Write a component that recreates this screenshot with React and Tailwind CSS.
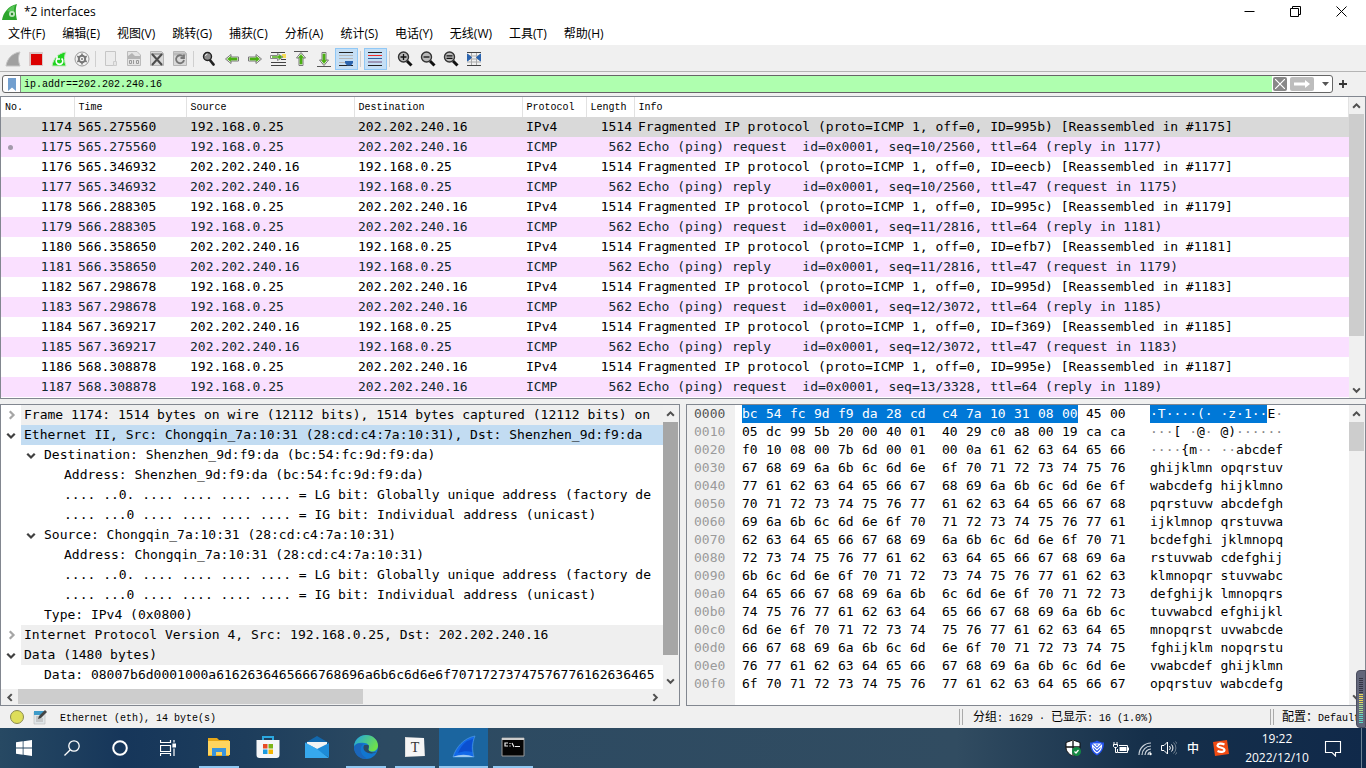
const MENUS = ["文件(F)", "编辑(E)", "视图(V)", "跳转(G)", "捕获(C)", "分析(A)", "统计(S)", "电话(Y)", "无线(W)", "工具(T)", "帮助(H)"];

const frag = (id, n) => `Fragmented IP protocol (proto=ICMP 1, off=0, ID=${id}) [Reassembled in #${n}]`;
const request = (seq, n) => `Echo (ping) request  id=0x0001, seq=${seq}, ttl=64 (reply in ${n})`;
const reply = (seq, n) => `Echo (ping) reply    id=0x0001, seq=${seq}, ttl=47 (request in ${n})`;

const HOST = "192.168.0.25";
const SERVER = "202.202.240.16";

const PACKETS = [
  [1174, "565.275560", HOST, SERVER, "IPv4", 1514, frag("995b", 1175)],
  [1175, "565.275560", HOST, SERVER, "ICMP", 562, request("10/2560", 1177)],
  [1176, "565.346932", SERVER, HOST, "IPv4", 1514, frag("eecb", 1177)],
  [1177, "565.346932", SERVER, HOST, "ICMP", 562, reply("10/2560", 1175)],
  [1178, "566.288305", HOST, SERVER, "IPv4", 1514, frag("995c", 1179)],
  [1179, "566.288305", HOST, SERVER, "ICMP", 562, request("11/2816", 1181)],
  [1180, "566.358650", SERVER, HOST, "IPv4", 1514, frag("efb7", 1181)],
  [1181, "566.358650", SERVER, HOST, "ICMP", 562, reply("11/2816", 1179)],
  [1182, "567.298678", HOST, SERVER, "IPv4", 1514, frag("995d", 1183)],
  [1183, "567.298678", HOST, SERVER, "ICMP", 562, request("12/3072", 1185)],
  [1184, "567.369217", SERVER, HOST, "IPv4", 1514, frag("f369", 1185)],
  [1185, "567.369217", SERVER, HOST, "ICMP", 562, reply("12/3072", 1183)],
  [1186, "568.308878", HOST, SERVER, "IPv4", 1514, frag("995e", 1187)],
  [1187, "568.308878", HOST, SERVER, "ICMP", 562, request("13/3328", 1189)],
];

const TREE = [
  { level: 0, arrow: "right", bg: "bg-[#efefef]", text: "Frame 1174: 1514 bytes on wire (12112 bits), 1514 bytes captured (12112 bits) on" },
  { level: 0, arrow: "down", bg: "bg-[#c2dcf2]", text: "Ethernet II, Src: Chongqin_7a:10:31 (28:cd:c4:7a:10:31), Dst: Shenzhen_9d:f9:da" },
  { level: 1, arrow: "down", text: "Destination: Shenzhen_9d:f9:da (bc:54:fc:9d:f9:da)" },
  { level: 2, text: "Address: Shenzhen_9d:f9:da (bc:54:fc:9d:f9:da)" },
  { level: 2, text: ".... ..0. .... .... .... .... = LG bit: Globally unique address (factory de" },
  { level: 2, text: ".... ...0 .... .... .... .... = IG bit: Individual address (unicast)" },
  { level: 1, arrow: "down", text: "Source: Chongqin_7a:10:31 (28:cd:c4:7a:10:31)" },
  { level: 2, text: "Address: Chongqin_7a:10:31 (28:cd:c4:7a:10:31)" },
  { level: 2, text: ".... ..0. .... .... .... .... = LG bit: Globally unique address (factory de" },
  { level: 2, text: ".... ...0 .... .... .... .... = IG bit: Individual address (unicast)" },
  { level: 1, text: "Type: IPv4 (0x0800)" },
  { level: 0, arrow: "right", bg: "bg-[#efefef]", text: "Internet Protocol Version 4, Src: 192.168.0.25, Dst: 202.202.240.16" },
  { level: 0, arrow: "down", bg: "bg-[#efefef]", text: "Data (1480 bytes)" },
  { level: 1, text: "Data: 08007b6d0001000a6162636465666768696a6b6c6d6e6f70717273747576776162636465" },
];

// headers first, then the ping payload: a..w over and over
const HEAD = "bc 54 fc 9d f9 da 28 cd c4 7a 10 31 08 00 45 00 05 dc 99 5b 20 00 40 01 40 29 c0 a8 00 19 ca ca f0 10 08 00 7b 6d 00 01 00 0a".split(" ");
const BYTES = [...HEAD];
while (BYTES.length < 256) BYTES.push((0x61 + ((BYTES.length - HEAD.length) % 23)).toString(16));
const HEX_ROWS = Array.from({ length: 16 }, (_, i) => BYTES.slice(i * 16, i * 16 + 16));
const SELECTED = 14;

const toChar = (h) => {
  const n = parseInt(h, 16);
  return n >= 32 && n < 127 ? String.fromCharCode(n) : "·";
};
const toAscii = (b) => b.slice(0, 8).map(toChar).join("") + " " + b.slice(8).map(toChar).join("");

function Ascii({ text }) {
  return text.split(/(·+)/).map((s, i) => (
    <span key={i} className={s[0] === "·" ? "text-[#888]" : ""}>{s}</span>
  ));
}

function Byte({ row, col, value }) {
  const on = row === 0 && col < SELECTED;
  const width = col === 7 ? "w-8" : col === 15 || (on && col === SELECTED - 1) ? "w-4" : "w-6";
  const gap = on && col === SELECTED - 1 ? " mr-2" : "";
  return <span className={width + gap + (on ? " bg-[#0078d7] text-white" : "")}>{value}</span>;
}

function Chevron({ dir, className }) {
  const d = { up: "M1 6l3-3 3 3", down: "M1 3l3 3 3-3", left: "M6 1L3 4l3 3", right: "M3 1l3 3-3 3" }[dir];
  return (
    <svg viewBox="0 0 8 8" className={className || "size-[9px] text-[#505050]"} fill="none" stroke="currentColor" strokeWidth="1.8">
      <path d={d} />
    </svg>
  );
}

function ScrollBar({ children, label }) {
  return (
    <div className="flex w-4 shrink-0 flex-col bg-[#f0f0f0]">
      <button aria-label={label + " up"} className="flex h-[17px] w-[15px] items-center justify-center"><Chevron dir="up" /></button>
      <div className="w-[15px] flex-1">{children}</div>
      <button aria-label={label + " down"} className="flex h-[17px] w-[15px] items-center justify-center"><Chevron dir="down" /></button>
    </div>
  );
}

function Fin({ light, dark, children }) {
  return (
    <svg viewBox="0 0 16 16" className="size-4">
      <path d="M1 15C2 8 7 2 15 1c-2 4-2 9 0 14z" fill={dark} stroke={light} strokeWidth="1" />
      {children}
    </svg>
  );
}

const page = <path d="M1.500 .5h11l2 2v12h-13z" fill="#d9d9d9" stroke="#b5b5b5" />;

function Lens({ children }) {
  return (
    <svg viewBox="0 0 16 16" className="size-4">
      <path d="M10 10l4.500 4.500" stroke="#111" strokeWidth="3" />
      <circle cx="6.500" cy="6" r="5" fill="#b9b9b9" stroke="#333" strokeWidth="1.400" />
      <path d={children} stroke="#111" strokeWidth="1.300" fill="none" />
    </svg>
  );
}

function Arrow({ rotate, bar }) {
  return (
    <svg viewBox="0 0 16 16" className="size-4">
      <g transform={`rotate(${rotate} 8 8)`}>
        <path d="M1.500 8L7 3.500V6h7.500v4H7v2.500z" fill="#fff" stroke="#777" />
        <path d="M3.500 8l3-2.300v1.300H13v2H6.500v1.300z" fill="#4caf14" stroke="#4caf14" strokeWidth=".8" />
      </g>
      {bar && <path d={bar} stroke="#555" />}
    </svg>
  );
}

const TOOLS = [
  { name: "Start capture", icon: <Fin light="#c4c4c4" dark="#a0a0a0" /> },
  { name: "Stop capture", icon: <svg viewBox="0 0 16 16" className="size-4"><path d="M1 1h14v14H1z" fill="#d9c9c9" /><path d="M3 3h11v11H3z" fill="#dc0000" /></svg> },
  {
    name: "Restart capture",
    icon: <Fin light="#c8e6c0" dark="#1fd51f"><path d="M6.500 7.500a3.300 3.300 0 1 0 4 0M6 5v3h3" fill="none" stroke="#fff" strokeWidth="1.600" /></Fin>,
  },
  {
    name: "Capture options",
    icon: (
      <svg viewBox="0 0 16 16" className="size-4">
        <circle cx="8" cy="8" r="7" fill="#f2f2f2" stroke="#999" />
        <circle cx="8" cy="8" r="3.200" fill="none" stroke="#777" strokeWidth="2" />
        <path d="M8 2.500v2M8 11.500v2M3.200 5.300l1.800 1M11 9.700l1.800 1M3.200 10.700l1.800-1M11 6.300l1.800-1" stroke="#777" strokeWidth="1.600" />
        <circle cx="8" cy="8" r="1" fill="#777" />
      </svg>
    ),
  },
  null,
  { name: "Open", icon: <svg viewBox="0 0 16 16" className="size-4"><path d="M2.500.5h10v14h-10z" fill="#ececec" stroke="#c6c6c6" /><path d="M10.500 10.500h3v4h-3z" fill="#e6e6e6" stroke="#ccc" /></svg> },
  {
    name: "Save",
    icon: (
      <svg viewBox="0 0 16 16" className="size-4">
        <path d="M1.500.5H11l3.500 3.500v10.500h-13z" fill="#e4e4e4" stroke="#bbb" />
        <path d="M2 5l4-3 3 3h5v3H2z" fill="#b4b4b4" />
        <path d="M3.500 9.500h2v3h-2zM7.500 9v4M10.500 9.500h2v3h-2z" fill="none" stroke="#999" />
      </svg>
    ),
  },
  { name: "Close", icon: <svg viewBox="0 0 16 16" className="size-4">{page}<path d="M2 3h12" stroke="#aaa" strokeWidth="2" /><path d="M3 3l10 11M13 3L3 14" stroke="#4d4d4d" strokeWidth="2" /></svg> },
  { name: "Reload", icon: <svg viewBox="0 0 16 16" className="size-4">{page}<path d="M2 3h12" stroke="#bbb" strokeWidth="3" /><path d="M11 5.500a4 4 0 1 0 1 3.500M12 3.500v3.500H8.500" fill="none" stroke="#777" strokeWidth="1.800" /></svg> },
  null,
  {
    name: "Find",
    icon: (
      <svg viewBox="0 0 16 16" className="size-4">
        <path d="M8.500 8.500l4 5" stroke="#222" strokeWidth="2.800" strokeLinecap="round" />
        <circle cx="6.500" cy="5.500" r="4" fill="#8c8c8c" stroke="#222" strokeWidth="1.400" />
        <path d="M4.500 5a2 2 0 0 1 2-2" stroke="#eee" fill="none" />
      </svg>
    ),
  },
  { name: "Previous", icon: <Arrow rotate={0} /> },
  { name: "Next", icon: <Arrow rotate={180} /> },
  {
    name: "Go to packet",
    icon: (
      <svg viewBox="0 0 16 16" className="size-4">
        <path d="M1 1.500h14M1 11.500h15M1 14.500h15M11 8.500h5" stroke="#444" />
        <path d="M12 3h4v4h-4z" fill="#f6dc56" />
        <path d="M.5 4.500h7v-2L13 6 7.500 9.500v-2h-7z" fill="#fff" stroke="#888" />
        <path d="M2 6h9M8.500 4.500L11 6 8.500 7.500" stroke="#4caf14" strokeWidth="1.500" fill="none" />
      </svg>
    ),
  },
  { name: "First packet", icon: <Arrow rotate={90} bar="M1 .5h14" /> },
  { name: "Last packet", icon: <Arrow rotate={270} bar="M1 15.500h14" /> },
  {
    name: "Auto scroll",
    active: true,
    icon: (
      <svg viewBox="0 0 16 16" className="size-4">
        <path d="M1 1.500h14M1 14.500h14" stroke="#222" />
        <path d="M1 4.500h14M1 7.500h14M1 11.500h6" stroke="#b5b5b5" />
        <path d="M7 10h8v2l-2 2.500H9L7 12z" fill="#2b64ae" />
      </svg>
    ),
  },
  null,
  {
    name: "Colorize",
    active: true,
    icon: (
      <svg viewBox="0 0 16 16" className="size-4">
        <path d="M1 1.500h14M1 14.500h14" stroke="#222" />
        <path d="M1 4.500h14" stroke="#ef2929" />
        <path d="M1 7.500h14" stroke="#34609e" />
        <path d="M1 11h14" stroke="#75507b" />
      </svg>
    ),
  },
  null,
  { name: "Zoom in", icon: <Lens>M3.500 6h6M6.500 3v6</Lens> },
  { name: "Zoom out", icon: <Lens>M3.500 6h6</Lens> },
  { name: "Normal size", icon: <Lens>M3.500 4.800h6M3.500 7.400h6</Lens> },
  {
    name: "Resize columns",
    icon: (
      <svg viewBox="0 0 16 16" className="size-4">
        <path d="M1 1.500h14M1 14.500h14" stroke="#444" />
        <path d="M1 5h14M1 8h14M1 11h14M5.500 2v12M10.500 2v12" stroke="#aaa" />
        <path d="M1.500 3v7l4-3.500zM14.500 3v7l-4-3.500z" fill="#2b64ae" stroke="#2b64ae" />
      </svg>
    ),
  },
];

const APPS = [
  {
    name: "File Explorer",
    open: true,
    icon: (
      <svg viewBox="0 0 24 24" className="size-6">
        <path d="M1 3h9l2 2h10v16H1z" fill="#e8a818" />
        <path d="M1 6h22v14H1z" fill="#ffd45e" />
        <path d="M5 21v-8h14v8h-4v-4H9v4z" fill="#3994dc" />
      </svg>
    ),
  },
  {
    name: "Microsoft Store",
    icon: (
      <svg viewBox="0 0 24 24" className="size-6">
        <path d="M7 6V2h10v4" fill="none" stroke="#2ba8e0" strokeWidth="2" />
        <path d="M0.500 5h23v15a3 3 0 0 1-3 3h-17a3 3 0 0 1-3-3z" fill="#f4f6f8" />
        <path d="M7 9h4.500v4.500H7z" fill="#e74c25" />
        <path d="M12.500 9H17v4.500h-4.500z" fill="#7cb518" />
        <path d="M7 14.500h4.500V19H7z" fill="#1a9be0" />
        <path d="M12.500 14.500H17V19h-4.500z" fill="#f5b400" />
      </svg>
    ),
  },
  {
    name: "Mail",
    icon: (
      <svg viewBox="0 0 24 24" className="size-6">
        <path d="M0 8l12-7 12 7z" fill="#1268ae" />
        <path d="M2 7h20v8H2z" fill="#f3f3f3" />
        <path d="M0 7.500L24 22.500V8L12 14z" fill="#1d8bd8" />
        <path d="M0 7.500V23h24L12 14z" fill="#36a8ee" />
      </svg>
    ),
  },
  {
    name: "Edge",
    open: true,
    icon: (
      <svg viewBox="0 0 24 24" className="size-6">
        <defs>
          <linearGradient id="sea" x1="0" y1="0" x2="1" y2="0.500">
            <stop offset="0" stopColor="#1fa3e8" />
            <stop offset="1" stopColor="#6de04c" />
          </linearGradient>
        </defs>
        <circle cx="12" cy="12" r="12" fill="#1276cf" />
        <path d="M0 11C1 4 6 0 12 0c7 0 12 5 12 10.500 0 4-3 6-6 6-3 0-4.500-1.200-3.500-2.500 1.500-2.500-.5-6-4-6C6 7 2 8 0 11z" fill="url(#sea)" />
        <path d="M10.500 10c-2 2-1 6 2.500 7.500 3.500 1.500 7 1 10-.5-4 1-7.500 0-8.500-2-.5-2 1-3 0-5z" fill="#2c4a63" />
        <path d="M9 9c-4 4-3 11 4 14.500C6 25 0 19 0 12c2-4 6-4 9-3z" fill="#1b66bb" />
      </svg>
    ),
  },
  {
    name: "Typora",
    open: true,
    icon: (
      <svg viewBox="0 0 24 24" className="size-6">
        <path d="M2 2l19 1 1 18-20 1z" fill="#dedede" />
        <path d="M3 3h18v18H3z" fill="#f5f5f5" />
        <text x="12" y="17" textAnchor="middle" fontSize="14" fontFamily="Liberation Serif, serif" fill="#333">T</text>
      </svg>
    ),
  },
  {
    name: "Wireshark",
    open: true,
    current: true,
    icon: (
      <svg viewBox="0 0 24 24" className="size-6">
        <path d="M1 22C4 12 12 3 23 1c-3 7-3 14-1 21z" fill="#1268e8" stroke="#58a2e8" strokeWidth=".6" />
        <path d="M1 22c7-3 14-3 21 0z" fill="#9cc9f2" />
        <path d="M15 6c-4 3-7 7-9 12 5-2 10-2 14-1-1-5 0-9 1-13z" fill="#0b4fd0" />
      </svg>
    ),
  },
  {
    name: "Command Prompt",
    open: true,
    icon: (
      <svg viewBox="0 0 24 24" className="size-6">
        <path d="M1 3h22v18H1z" fill="#050505" stroke="#999" />
        <path d="M1 3h22v2H1z" fill="#ccc" />
        <path d="M7 8H4v3h3M9 8v1M9 10.500v1M11 8l2 4M14 11.500h5" fill="none" stroke="#eee" strokeWidth="1.200" />
      </svg>
    ),
  },
];

function Taskbar() {
  return (
    <footer className="flex h-10 shrink-0 items-stretch bg-[linear-gradient(90deg,#274963_0%,#16365a_9%,#1d3d5c_18%,#2c4a62_28%,#314c61_70%,#152f4a_84%,#10294a_100%)] font-['Open_Sans','Noto_Sans_CJK_SC',sans-serif] text-xs text-white">
      <button aria-label="Start" className="flex w-12 items-center justify-center">
        <svg viewBox="0 0 16 16" className="size-4" fill="#fff"><path d="M0 2.300l6.700-1v6.300H0zM7.500 1.200L16 0v7.600H7.500zM0 8.400h6.700v6.300L0 13.800zM7.500 8.400H16V16l-8.500-1.200z" /></svg>
      </button>
      <button aria-label="Search" className="flex w-12 items-center justify-center">
        <svg viewBox="0 0 16 16" className="size-4" fill="none" stroke="#fff" strokeWidth="1.300"><circle cx="10" cy="6" r="5.200" /><path d="M6.300 9.700L.5 15.500" /></svg>
      </button>
      <button aria-label="Cortana" className="flex w-12 items-center justify-center">
        <svg viewBox="0 0 16 16" className="size-4" fill="none" stroke="#fff" strokeWidth="2"><circle cx="8" cy="8" r="6.800" /></svg>
      </button>
      <button aria-label="Task view" className="flex w-12 items-center justify-center">
        <svg viewBox="0 0 16 16" className="size-4" fill="none" stroke="#fff" strokeWidth="1.200"><path d="M.5 0v2.500h10V0M.5 5.500h10v6H.5zM.5 16v-2.500h10V16M14 0v2.500M14 8.500V16" /><path d="M13 4h2.500v3H13z" fill="#fff" /></svg>
      </button>
      <div className="ml-0.5 flex">
        {APPS.map((a) => (
          <button key={a.name} aria-label={a.name} className={"flex w-[49px] flex-col items-center " + (a.current ? "bg-[#1b659f]" : "")}>
            <span className="flex flex-1 items-center">{a.icon}</span>
            <span className={"h-0.5 " + (a.current ? "w-full bg-[#91c8f2]" : a.open ? "w-10 bg-[#91c8f2]" : "w-10")} />
          </button>
        ))}
      </div>
      <div className="ml-auto flex items-center">
        <button aria-label="Security" className="flex w-6 justify-center">
          <svg viewBox="0 0 16 16" className="size-4"><path d="M8 0l7 2.500v5C15 12 11 15 8 16 5 15 1 12 1 7.500v-5z" fill="#fff" stroke="#111" /><path d="M8 1v14M1 7h14" stroke="#111" strokeWidth="1.300" /><circle cx="11.500" cy="11.500" r="4.500" fill="#148a44" /><path d="M9.500 11.500l1.500 1.500 2.500-3" fill="none" stroke="#fff" strokeWidth="1.200" /></svg>
        </button>
        <button aria-label="PC Manager" className="flex w-6 justify-center">
          <svg viewBox="0 0 16 16" className="size-4"><path d="M8 .5C10 2 13 2.500 15 2.500 15 9 12.500 13 8 15.500 3.500 13 1 9 1 2.500c2 0 5-.5 7-2z" fill="#2353f0" /><path d="M3.500 5.500L8 10l4.500-4.500c0 3.500-2 6-4.500 7.500-2.500-1.500-4.500-4-4.500-7.500zM5 4h6L8 7z" fill="none" stroke="#fff" strokeWidth="1.200" /></svg>
        </button>
        <button aria-label="Battery" className="flex w-6 justify-center">
          <svg viewBox="0 0 16 16" className="size-4" fill="none" stroke="#fff"><path d="M1 2v3M4 2v3M.5 4.500h4v2l-1 1h-2l-1-1zM2.500 8v4.500H4M6 5.500h8.500v7H4.500V9" /><path d="M6.500 7h7v4h-7z" fill="#fff" stroke="none" /><path d="M15.500 7.500v3" /></svg>
        </button>
        <button aria-label="Wi-Fi" className="flex w-6 justify-center">
          <svg viewBox="0 0 16 16" className="size-4" fill="none" stroke="#ccd4dc" strokeWidth="1.200"><path d="M2 15A12 12 0 0 1 14 3M5 15a9 9 0 0 1 9-9M8 15a6 6 0 0 1 6-6M11 15a3 3 0 0 1 3-3" /><circle cx="13.500" cy="14" r="1.200" fill="#fff" stroke="none" /></svg>
        </button>
        <button aria-label="Volume" className="flex w-6 justify-center">
          <svg viewBox="0 0 16 16" className="size-4" fill="none" stroke="#fff"><path d="M.5 5.500H3L6.500 2v12L3 10.500H.5z" /><path d="M8.500 6a3 3 0 0 1 0 4M10.500 4.500a5 5 0 0 1 0 7" /><path d="M12.500 2.500a7.500 7.500 0 0 1 0 11M14.500 1.500a9 9 0 0 1 0 13" stroke="#70808f" /></svg>
        </button>
        <button className="w-6 font-['Noto_Sans_CJK_SC',sans-serif] text-xs font-medium">中</button>
        <button aria-label="Sogou input" className="flex w-8 justify-center">
          <svg viewBox="0 0 16 16" className="size-4"><path d="M0 2l14-2 2 14-14 2z" fill="#f04a12" /><path d="M11.500 4.500C8 3 5 3.500 4.500 5.500c0 2.500 7 1.500 7 4.500 0 2-4 2.500-7 1" fill="none" stroke="#fff" strokeWidth="2.200" /></svg>
        </button>
        <time className="w-20 text-center leading-[19px]">19:22<br />2022/12/10</time>
        <button aria-label="Notifications" className="flex w-8 justify-center">
          <svg viewBox="0 0 18 18" className="size-[18px]" fill="none" stroke="#fff" strokeWidth="1.100"><path d="M1.500 2.500h15v11h-5V17L8 13.500H1.500z" /></svg>
        </button>
        <span className="ml-3 mr-1 h-10 w-px bg-[#6d8194]" />
      </div>
    </footer>
  );
}

export default function App() {
  return (
    <div className="relative flex h-screen flex-col overflow-hidden bg-[#f0f0f0] font-['Open_Sans','Noto_Sans_CJK_SC',sans-serif] text-xs text-black">
      <header className="shrink-0 border-b border-[#f0f0f0] bg-white">
        <div className="flex h-[23px] items-center px-0.5">
          <svg viewBox="0 0 16 16" className="size-4">
            <path d="M0 16C1 9 6 2 15 0c-2 5-1 11 0 16z" fill="#2ca52c" />
            <path d="M5 7c2-3 5-5 8-6-1 3-1 5-1 8z" fill="#55c455" />
            <circle cx="10" cy="10" r="3" fill="#bfe6bf" /><circle cx="10" cy="10" r="1.200" fill="#2a8a2a" />
          </svg>
          <h1 className="ml-1.5">*2 interfaces</h1>
          <div className="ml-auto flex">
            <button aria-label="Minimize" className="flex w-[46px] justify-center"><svg viewBox="0 0 11 11" className="size-[11px]" stroke="#000"><path d="M.5 5.500h10" /></svg></button>
            <button aria-label="Restore" className="flex w-[46px] justify-center"><svg viewBox="0 0 11 11" className="size-[11px]" stroke="#000" fill="none"><path d="M.5 2.500h8v8h-8zM2.500 2.500v-2h8v8h-2" /></svg></button>
            <button aria-label="Close window" className="flex w-[46px] justify-center"><svg viewBox="0 0 11 11" className="size-[11px]" stroke="#000"><path d="M.5.5l10 10M10.500.5l-10 10" /></svg></button>
          </div>
        </div>
        <nav className="flex h-[22px] items-center gap-[17px] px-2">
          {MENUS.map((m) => <button key={m}>{m}</button>)}
        </nav>
      </header>

      <div className="flex h-[26px] shrink-0 items-start border-b border-[#b4b4b4] pt-0.5 pl-px">
        {TOOLS.map((t, i) =>
          t ? (
            <button key={t.name} aria-label={t.name} className={"flex h-[22px] w-[23px] items-center " + (t.active ? "border border-[#90c8f6] bg-[#c5dff5] pl-0.5" : "pl-1")}>{t.icon}</button>
          ) : (
            <span key={i} className="mt-[3px] mr-[3px] ml-0.5 h-4 w-px bg-[#cfcfcf]" />
          )
        )}
      </div>

      <form className="flex h-6 shrink-0 items-center px-0.5">
        <div className="flex h-[18px] flex-1 items-center overflow-hidden rounded-[3px] border border-[#666] bg-white">
          <button type="button" aria-label="Filter bookmarks" className="flex h-full w-[18px] items-center justify-center border-r border-[#888]">
            <svg viewBox="0 0 8 13" className="h-[13px] w-2"><path d="M0 0h8v13L4 9.500 0 13z" fill="#729fcf" /></svg>
          </button>
          <input aria-label="Display filter" defaultValue="ip.addr==202.202.240.16" className="h-full flex-1 bg-[#afffaf] px-[3px] font-['Liberation_Mono',monospace] text-[10px] outline-none" />
          <button type="button" aria-label="Clear filter" className="ml-px flex size-3.5 items-center justify-center rounded-[2px] bg-[#888]"><svg viewBox="0 0 10 10" className="size-2.5" stroke="#fff" strokeWidth="1.200"><path d="M0 0l10 10M10 0L0 10" /></svg></button>
          <button type="button" aria-label="Apply filter" className="ml-[3px] flex h-3.5 w-6 items-center justify-center rounded-[2px] bg-[#bdbdbd]"><svg viewBox="0 0 16 8" className="h-2 w-4"><path d="M0 2.500h11V0l5 4-5 4V5.500H0z" fill="#fff" /></svg></button>
          <button type="button" aria-label="Filter history" className="flex w-[18px] justify-center pl-1"><svg viewBox="0 0 7 4" className="h-1 w-[7px]"><path d="M0 0h7L3.500 4z" fill="#555" /></svg></button>
        </div>
        <button type="button" aria-label="Add filter button" className="flex w-[31px] justify-center pr-3"><svg viewBox="0 0 8 8" className="size-2" stroke="#333" strokeWidth="1.800"><path d="M0 4h8M4 0v8" /></svg></button>
      </form>

      <section className="flex shrink-0 border border-[#828790] bg-white font-['DejaVu_Sans_Mono',monospace] text-[13px] whitespace-pre">
        <div className="min-w-0 flex-1 overflow-hidden pb-px">
          <table className="w-full table-fixed border-collapse">
            <colgroup>
              <col className="w-[73px]" />
              <col className="w-28" />
              <col className="w-42" />
              <col className="w-42" />
              <col className="w-16" />
              <col className="w-12" />
              <col />
            </colgroup>
            <thead className="font-['Liberation_Mono',monospace] text-[10px]">
              <tr className="h-5 text-left">
                {["No.", "Time", "Source", "Destination", "Protocol", "Length", "Info"].map((h) => (
                  <th key={h} className="border-r border-[#e2e2e2] p-0 pt-0.5 pl-1 font-normal">{h}</th>
                ))}
              </tr>
            </thead>
            <tbody>
              {PACKETS.map(([no, time, src, dst, proto, len, info], i) => (
                <tr key={no} className={"h-5 leading-5 " + (i === 0 ? "bg-[#d9d9d9]" : proto === "ICMP" ? "bg-[#fae0ff] text-[#12272e]" : "")}>
                  <td className="p-0 pr-0.5">
                    <span className="flex items-center justify-between">
                      <span className={"ml-[7px] size-[5px] rounded-full " + (no === 1175 ? "bg-[#a39aab]" : "")} />
                      {no}
                    </span>
                  </td>
                  <td className="p-0 pl-1">{time}</td>
                  <td className="p-0 pl-1">{src}</td>
                  <td className="p-0 pl-1">{dst}</td>
                  <td className="p-0 pl-1">{proto}</td>
                  <td className="p-0 pr-0.5 text-right">{len}</td>
                  <td className="p-0 pl-1">{info}</td>
                </tr>
              ))}
            </tbody>
          </table>
        </div>
        <ScrollBar label="Packets"><div className="h-[83%] bg-[#cdcdcd]" /></ScrollBar>
      </section>

      <main className="mt-[5px] grid min-h-0 flex-1 grid-cols-2 gap-[6px] font-['DejaVu_Sans_Mono',monospace] text-[13px] whitespace-pre">
        <section className="flex min-h-0 min-w-0 flex-col border border-[#828790] bg-white">
          <div className="flex min-h-0 flex-1">
            <ul className="min-w-0 flex-1 overflow-hidden">
              {TREE.map((n, i) => (
                <li key={i} className={"flex h-5 items-center leading-5 " + (n.level === 1 ? "pl-5" : n.level === 2 ? "pl-10" : "")}>
                  <span className="flex w-5 shrink-0 items-center justify-center">
                    {n.arrow && <Chevron dir={n.arrow} className={"size-[10px] " + (n.arrow === "down" ? "text-[#404040]" : "text-[#a6a6a6]")} />}
                  </span>
                  <span className={"min-w-0 flex-1 overflow-hidden pl-[3px] " + (n.bg || "")}>{n.text}</span>
                </li>
              ))}
            </ul>
            <ScrollBar label="Details"><div className="h-[93%] bg-[#a6a6a6]" /></ScrollBar>
          </div>
          <div className="flex h-4 shrink-0 bg-[#f0f0f0] pr-4">
            <button aria-label="Details left" className="flex w-[17px] items-center justify-center"><Chevron dir="left" /></button>
            <div className="flex-1"><div className="h-[15px] w-[55%] bg-[#cdcdcd]" /></div>
            <button aria-label="Details right" className="flex w-[17px] items-center justify-center"><Chevron dir="right" /></button>
          </div>
        </section>

        <section className="flex min-h-0 min-w-0 border border-[#828790] bg-white leading-[18px]">
          <div className="w-12 shrink-0 bg-[#f0f0f0] pl-[7px] text-[#9a9a9a]">
            {HEX_ROWS.map((_, i) => (
              <div key={i} className={i === 0 ? "text-[#555]" : ""}>{(i * 16).toString(16).padStart(4, "0")}</div>
            ))}
          </div>
          <div className="ml-[7px] shrink-0">
            {HEX_ROWS.map((b, i) => (
              <div key={i} className="flex">
                {b.map((h, j) => <Byte key={j} row={i} col={j} value={h} />)}
              </div>
            ))}
          </div>
          <div className="ml-6 flex-1">
            {HEX_ROWS.map((b, i) => (
              <div key={i}>
                {i === 0 ? <><span className="inline-block bg-[#0078d7] text-white">{toAscii(b).slice(0, 15)}</span><Ascii text={toAscii(b).slice(15)} /></> : <Ascii text={toAscii(b)} />}
              </div>
            ))}
          </div>
          <ScrollBar label="Bytes"><div className="h-[29px] bg-[#cdcdcd]" /></ScrollBar>
        </section>
      </main>

      <div className="flex h-[22px] shrink-0 items-center font-['Liberation_Mono','Noto_Sans_CJK_SC',monospace] text-[10px] whitespace-pre">
        <button aria-label="Expert information" className="ml-2.5 size-3.5 rounded-full border border-[#8a8a50] bg-[#dede5a]" />
        <button aria-label="Capture comment" className="ml-2">
          <svg viewBox="0 0 16 16" className="size-4"><path d="M2 3h11v12H2z" fill="#dfe5e8" stroke="#bbb" strokeWidth=".6" /><path d="M2 2h10v4H2z" fill="#3d9bc9" /><path d="M4 8h5M4 10h7M4 12h7" stroke="#aaa" /><path d="M6 10l1-3 6-6 2 2-6 6z" fill="#444" /></svg>
        </button>
        <span className="ml-3 flex-1 pt-1">Ethernet (eth), 14 byte(s)</span>
        <div className="flex h-[22px] w-[311px] items-center">
          <span className="mr-2.5 h-4 w-1 border-x border-[#aaa]" />
          <span className="pt-0.5"><span className="text-xs">分组</span>: 1629 · <span className="text-xs">已显示</span>: 16 (1.0%)</span>
        </div>
        <div className="flex h-[22px] w-24 items-center overflow-hidden">
          <span className="mr-2 h-4 w-1 shrink-0 border-x border-[#aaa]" />
          <button className="pt-0.5"><span className="text-xs">配置：</span>Default</button>
        </div>
      </div>

      <Taskbar />

      <div className="absolute right-0 bottom-10 flex h-[58px] w-[10px] flex-col justify-end gap-px rounded-l-sm border border-[#4a4d5e] bg-[#62667a] px-0.5 py-1">
        {Array.from({ length: 23 }, (_, i) => (
          <span key={i} className={"h-px " + (i < 8 ? "bg-[#333544]" : i < 13 ? "bg-[#e8d85a]" : i < 18 ? "bg-[#a8dc8c]" : "bg-[#5fd8c4]")} />
        ))}
      </div>
    </div>
  );
}
